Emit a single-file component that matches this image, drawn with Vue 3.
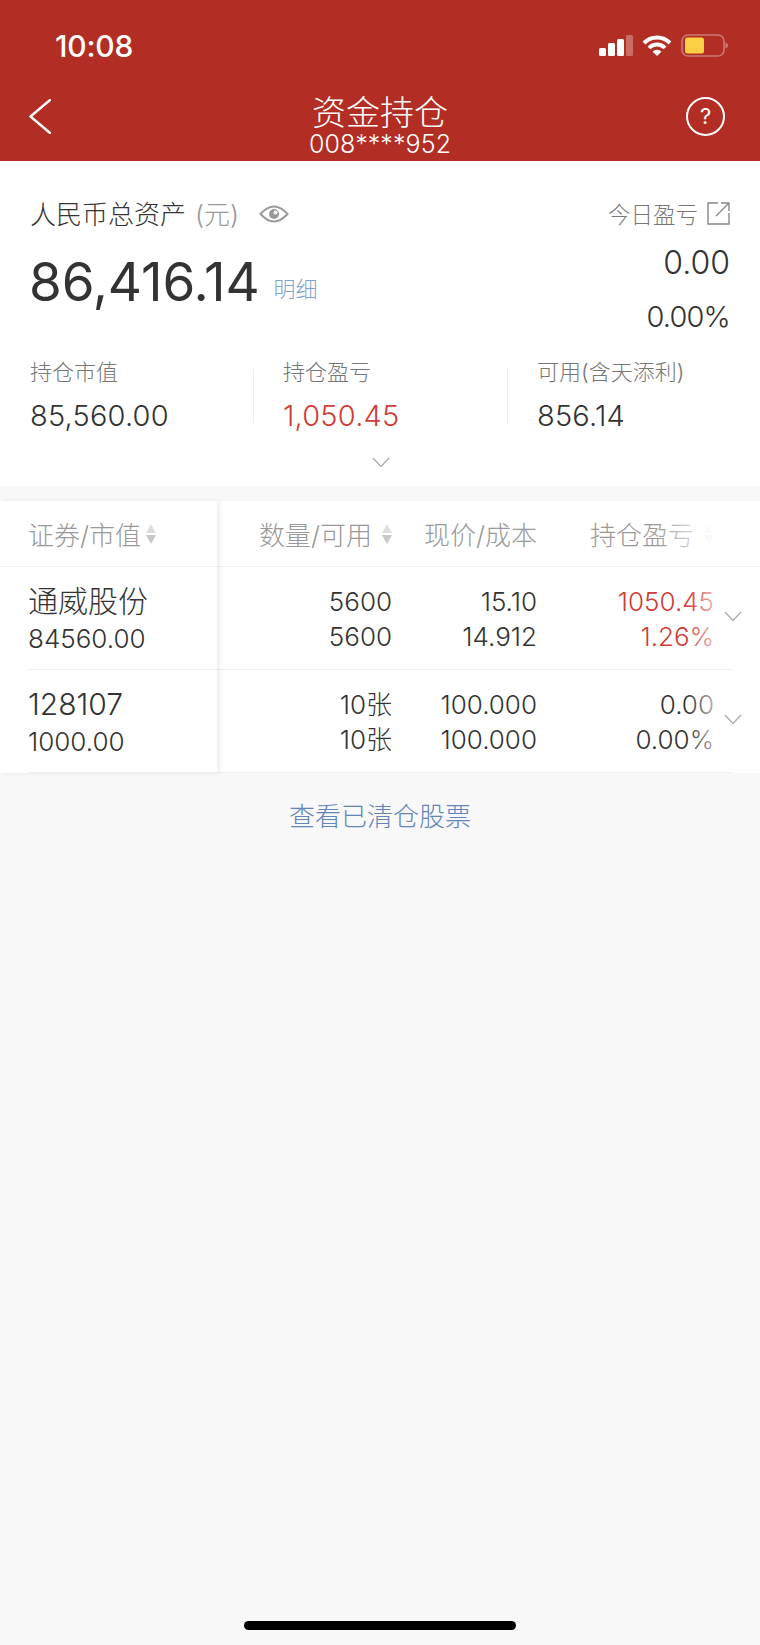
<script setup>
const stats = [
  { label: '持仓市值', value: '85,560.00', red: false },
  { label: '持仓盈亏', value: '1,050.45', red: true },
  { label: '可用(含天添利)', value: '856.14', red: false },
]
const rows = [
  { name: '通威股份', mv: '84560.00', qty: '5600', avail: '5600', price: '15.10', cost: '14.912', pl: '1050.45', pct: '1.26%', red: true },
  { name: '128107', mv: '1000.00', qty: '10张', avail: '10张', price: '100.000', cost: '100.000', pl: '0.00', pct: '0.00%', red: false },
]
</script>

<template>
  <div class="page">
    <header class="head">
      <div class="status">
        <span class="time">10:08</span>
        <div class="status-icons">
          <svg width="34" height="21" viewBox="0 0 34 21">
            <rect x="0" y="13" width="7" height="8" rx="1.5" fill="#fff" />
            <rect x="9" y="8" width="7" height="13" rx="1.5" fill="#fff" />
            <rect x="18" y="4" width="7" height="17" rx="1.5" fill="#fff" />
            <rect x="27" y="0" width="7" height="21" rx="1.5" fill="#fff" fill-opacity=".3" />
          </svg>
          <svg class="wifi" width="30" height="21" viewBox="0 0 30 21">
            <path d="M2 8 A18 18 0 0 1 28 8" fill="none" stroke="#fff" stroke-width="4" />
            <path d="M7 13 A11 11 0 0 1 23 13" fill="none" stroke="#fff" stroke-width="4" />
            <path d="M15 21 L10.5 16.5 A6.5 6.5 0 0 1 19.5 16.5 Z" fill="#fff" />
          </svg>
          <svg class="batt" width="47" height="23" viewBox="0 0 47 23">
            <rect x="1" y="1" width="42" height="21" rx="6" fill="none" stroke="#fff" stroke-opacity=".35" stroke-width="1.6" />
            <rect x="4" y="3.5" width="19" height="16" rx="2.5" fill="#fcd044" />
            <path d="M44.5 8.5 Q47 9.5 47 11.5 Q47 13.5 44.5 14.5 Z" fill="#fff" fill-opacity=".4" />
          </svg>
        </div>
      </div>
      <div class="nav">
        <svg class="back" width="22" height="35" viewBox="0 0 22 35">
          <path d="M21 1 L1.5 17.5 L21 34" fill="none" stroke="#fff" stroke-width="2.3" stroke-linecap="round" stroke-linejoin="round" />
        </svg>
        <div class="title">
          <div class="t1">资金持仓</div>
          <div class="t2">008****952</div>
        </div>
        <div class="help">?</div>
      </div>
    </header>

    <section class="summary">
      <div class="top">
        <div>
          <div class="asset-label">
            <span>人民币总资产</span><span class="unit">(元)</span>
            <svg class="eye" width="30" height="24" viewBox="0 0 30 24">
              <path d="M1.5 12 Q15 -3 28.5 12 Q15 27 1.5 12 Z" fill="none" stroke="#999" stroke-width="2" />
              <circle cx="15" cy="12" r="5" fill="#999" />
              <circle cx="16.5" cy="10.5" r="2" fill="#fff" />
            </svg>
          </div>
          <div class="asset-row">
            <span class="asset">86,416.14</span>
            <span class="detail">明细</span>
          </div>
        </div>
        <div class="today">
          <div class="today-label">
            <span>今日盈亏</span>
            <svg width="23" height="23" viewBox="0 0 23 23">
              <path d="M11 1 H1 V22 H22 V11" fill="none" stroke="#888" stroke-width="1.4" />
              <path d="M9 14 L22 1 M14 1 H22 V9" fill="none" stroke="#888" stroke-width="1.4" />
            </svg>
          </div>
          <div class="today-val">0.00</div>
          <div class="today-val pct">0.00%</div>
        </div>
      </div>
      <div class="stats">
        <div v-for="s in stats" :key="s.label" class="stat">
          <div class="stat-label">{{ s.label }}</div>
          <div class="stat-val" :class="{ red: s.red }">{{ s.value }}</div>
        </div>
      </div>
      <svg class="more" width="18" height="11" viewBox="0 0 18 11">
        <path d="M1 1 L9 9.5 L17 1" fill="none" stroke="#aaa" stroke-width="1.2" />
      </svg>
    </section>

    <section class="table">
      <div class="fixed">
        <div class="th th-fixed">
          <span>证券/市值</span>
          <span class="sort"><i class="up"></i><i class="down"></i></span>
        </div>
        <div v-for="r in rows" :key="r.name" class="cell-fixed">
          <div class="name">{{ r.name }}</div>
          <div class="mv">{{ r.mv }}</div>
        </div>
      </div>
      <div class="scroll">
        <div class="th th-scroll">
          <div class="col c1"><span>数量/可用</span><span class="sort lite"><i class="up"></i><i class="down"></i></span></div>
          <div class="col c2">现价/成本</div>
          <div class="col c3"><span>持仓盈亏</span><span class="sort lite"><i class="up"></i><i class="down"></i></span></div>
          <div class="fade fade-head"></div>
        </div>
        <div v-for="r in rows" :key="r.name" class="row">
          <div class="col c1 num"><div>{{ r.qty }}</div><div>{{ r.avail }}</div></div>
          <div class="col c2 num"><div>{{ r.price }}</div><div>{{ r.cost }}</div></div>
          <div class="col c3 num" :class="{ red: r.red }"><div>{{ r.pl }}</div><div>{{ r.pct }}</div></div>
          <div class="fade fade-row"></div>
          <svg class="chev" width="18" height="11" viewBox="0 0 18 11">
            <path d="M1 1 L9 9.5 L17 1" fill="none" stroke="#aaa" stroke-width="1.2" />
          </svg>
        </div>
      </div>
    </section>

    <div class="link">查看已清仓股票</div>
    <div class="home"></div>
  </div>
</template>

<style>
html, body { margin: 0; background: #f8f8f8; }
</style>

<style scoped>
.page {
  position: relative;
  width: 760px;
  height: 1645px;
  background: #f8f8f8;
  overflow: hidden;
  font-family: Inter, "Noto Sans CJK SC", sans-serif;
  color: #333;
}
.head { height: 161px; background: #b22e25; color: #fff; }
.status {
  height: 88px;
  box-sizing: border-box;
  padding: 3px 32px 0 55px;
  display: flex;
  justify-content: space-between;
  align-items: center;
}
.time { font-size: 30px; font-weight: 500; letter-spacing: -.2px; }
.status-icons { display: flex; align-items: center; gap: 9px; }
.nav { position: relative; height: 73px; display: flex; justify-content: space-between; align-items: flex-start; padding: 0 35px 0 29px; }
.back { margin-top: 11px; }
.title { position: absolute; left: 0; right: 0; top: 7px; text-align: center; }
.t1 { font-size: 34px; line-height: 36px; font-weight: 300; }
.t2 { font-size: 25px; line-height: 22px; margin-top: 2px; font-weight: 300; letter-spacing: .1px; }
.help {
  box-sizing: border-box;
  width: 39px;
  height: 39px;
  margin-top: 9px;
  border: 2px solid #fff;
  border-radius: 50%;
  text-align: center;
  font-size: 22px;
  line-height: 34px;
}
.summary { position: relative; height: 325px; background: #fff; padding: 0 30px; box-sizing: border-box; }
.top { display: flex; justify-content: space-between; }
.asset-label { display: flex; align-items: center; height: 36px; margin-top: 33px; margin-bottom: 1px; font-size: 26px; font-weight: 300; }
.unit { color: #999; margin-left: 9px; }
.eye { margin-left: 20px; margin-top: 4px; }
.asset-row { display: flex; align-items: baseline; margin-top: 18px; margin-left: -1px; }
.asset { font-size: 53px; line-height: 68px; font-weight: 400; letter-spacing: -.1px; }
.detail { position: relative; top: -4px; font-size: 22px; color: #7fa3d1; margin-left: 14px; font-weight: 300; }
.today { text-align: right; }
.today-label { display: flex; justify-content: flex-end; align-items: center; gap: 9px; height: 36px; margin-top: 34px; font-size: 22.5px; color: #777; font-weight: 300; }
.today-val { font-size: 32px; line-height: 54px; font-weight: 300; }
.today-val.pct { font-size: 29px; letter-spacing: -.8px; }
.today-label + .today-val { margin-top: 5px; }
.stats { display: flex; margin-top: 12px; }
.stat { flex: 0 0 254px; box-sizing: border-box; padding-left: 30px; position: relative; }
.stat:first-child { flex-basis: 223px; padding-left: 0; }
.stat:not(:first-child)::before {
  content: "";
  position: absolute;
  left: 0;
  top: 13px;
  height: 54px;
  width: 1px;
  background: #eee;
}
.stat-label { font-size: 22px; line-height: 32px; color: #777; font-weight: 300; }
.stat-val { font-size: 29px; line-height: 40px; margin-top: 8px; font-weight: 300; letter-spacing: .2px; }
.red { color: #d03c37; }
.more { position: absolute; left: 372px; top: 296px; }
.table { margin-top: 15px; display: flex; background: #fff; height: 272px; }
.fixed {
  position: relative;
  z-index: 2;
  flex: 0 0 217px;
  background: #fff;
  box-shadow: 3px 0 5px rgba(0, 0, 0, .07);
}
.th { position: relative; height: 65px; border-bottom: 1px solid #f0f0f0; display: flex; align-items: center; font-size: 26px; color: #999; font-weight: 300; }
.th-fixed { padding-left: 28px; }
.sort { display: inline-flex; flex-direction: column; gap: 2px; margin-left: 5px; }
.sort.lite { margin-left: 10px; }
.up, .down { display: block; width: 0; height: 0; border-left: 5px solid transparent; border-right: 5px solid transparent; }
.up { border-bottom: 9px solid #ddd; }
.down { border-top: 9px solid #c8c8c8; }
.cell-fixed {
  height: 102px;
  margin-left: 28px;
  border-bottom: 1px solid #eee;
  font-weight: 300;
}
.name { font-size: 30px; line-height: 40px; padding-top: 14px; }
.mv { font-size: 26px; line-height: 34px; padding-top: 1px; }
.scroll { position: relative; flex: 1; }
.th-scroll .col { display: flex; justify-content: flex-end; align-items: center; }
.col { flex: none; text-align: right; box-sizing: border-box; }
.c1 { width: 175px; }
.c2 { width: 145px; }
.c3 { width: 177px; }
.th-scroll .c3 { justify-content: flex-start; padding-left: 53px; white-space: nowrap; }
.row {
  position: relative;
  height: 103px;
  margin-right: 28px;
  border-bottom: 1px solid #eee;
  display: flex;
  align-items: flex-start;
  padding-top: 17px;
  box-sizing: border-box;
  font-weight: 300;
}
.num { font-size: 26px; line-height: 35px; }
.chev { position: absolute; right: -10px; top: 44px; z-index: 4; }
.fade { position: absolute; z-index: 3; }
.fade-head {
  left: 440px;
  top: 0;
  bottom: 0;
  width: 65px;
  background: linear-gradient(to right, rgba(255,255,255,0), #fff 90%);
}
.fade-row {
  left: 470px;
  top: 10px;
  bottom: 10px;
  width: 28px;
  background: linear-gradient(to right, rgba(255,255,255,0), rgba(255,255,255,.65));
}
.link { margin-top: 29px; text-align: center; font-size: 26px; line-height: 30px; color: #6384b8; font-weight: 300; }
.home { position: absolute; left: 244px; top: 1621px; width: 272px; height: 9px; border-radius: 5px; background: #000; }
</style>
